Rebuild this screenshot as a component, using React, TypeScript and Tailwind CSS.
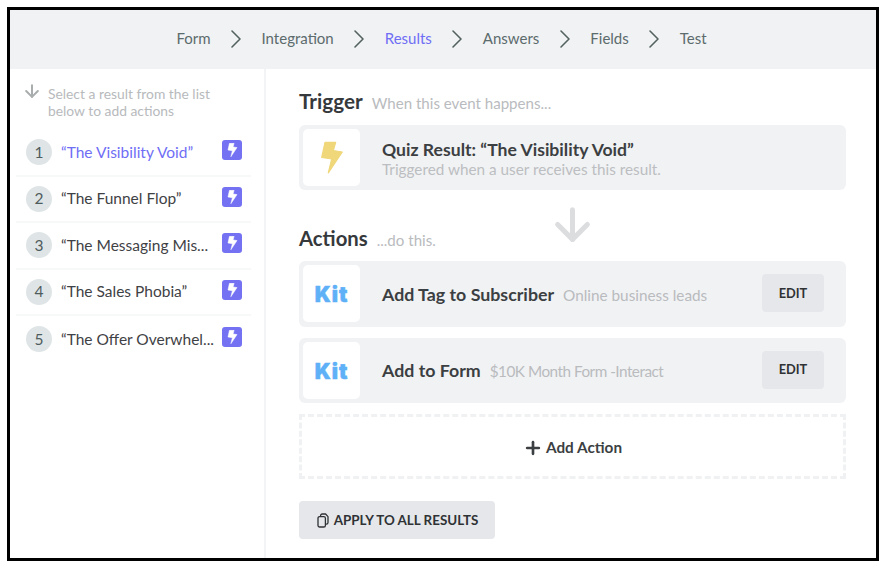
import { ArrowDown, ChevronRight, Plus } from 'lucide-react';

const steps = ['Form', 'Integration', 'Results', 'Answers', 'Fields', 'Test'];

const results = [
  '“The Visibility Void”',
  '“The Funnel Flop”',
  '“The Messaging Mis...',
  '“The Sales Phobia”',
  '“The Offer Overwhel...',
];

const Bolt = ({ className }: { className: string }) => (
  <svg viewBox="0 0 24 32" className={className} fill="currentColor">
    <path d="M5 .8 15.7.8 13.3 9 22.3 10.5 8.3 31.3 11.7 17.5 1.7 16Z" strokeLinejoin="round" stroke="currentColor" strokeWidth="1.2" />
  </svg>
);

const CopyIcon = () => (
  <svg viewBox="0 0 12 15" className="h-[15px] w-[12px]" fill="none" stroke="currentColor" strokeWidth="1.3" strokeLinejoin="round">
    <rect x="1" y="3.6" width="7.4" height="10.4" rx="1.6" />
    <path d="M3.6 3.4V2.6A1.6 1.6 0 0 1 5.2 1H8.6L11 3.6V9.6A1.6 1.6 0 0 1 9.4 11.2H8.4" />
  </svg>
);

const Tile = ({ children }: { children: React.ReactNode }) => (
  <div className="flex h-[57px] w-[57px] shrink-0 items-center justify-center rounded-[5px] bg-white">{children}</div>
);

const KitLogo = () => (
  <span className="pt-[2px] font-['Inter',sans-serif] text-[21px] leading-none font-black tracking-[1px] text-[#5eb0f7] [-webkit-text-stroke:0.5px_#5eb0f7]">Kit</span>
);

const ActionCard = ({ title, detail, detailClass }: { title: string; detail: string; detailClass: string }) => (
  <div className="flex h-[65.5px] items-center rounded-md bg-[#f1f2f4] pr-[22px] pl-1">
    <Tile>
      <KitLogo />
    </Tile>
    <div className="ml-[22px] flex flex-1 items-baseline gap-[9px] pt-[1px]">
      <span className="text-[17.8px] font-bold text-[#3c3f42]">{title}</span>
      <span className={`text-[15.3px] text-[#b9bbbe] ${detailClass}`}>{detail}</span>
    </div>
    <button className="mb-[1px] h-[38px] w-[62px] rounded bg-[#e6e7ea] text-[12.8px] font-bold text-[#2f3235]">EDIT</button>
  </div>
);

export default function App() {
  return (
    <div className="h-[570px] w-[888px] bg-white p-[7px] font-['Lato',sans-serif]">
      <div className="flex h-[554px] w-[872px] flex-col border-[3px] border-black bg-white">
        <div className="flex h-[59px] shrink-0 items-center justify-center bg-[#f0f2f4] pr-[3px] pb-[2px]">
          {steps.map((step, i) => (
            <div key={step} className="flex items-center">
              <span className={`text-[15px] ${step === 'Results' ? 'text-[#6f6ef5]' : 'text-[#5c6b6c]'}`}>{step}</span>
              {i < steps.length - 1 && <ChevronRight className="mx-[9.5px] h-[32px] w-[32px] text-[#54625f]" strokeWidth={1.2} />}
            </div>
          ))}
        </div>

        <div className="flex min-h-0 flex-1">
          <aside className="w-[256px] shrink-0 border-r-2 border-[#f3f4f5] pt-[17px] pr-[13px] pl-[6px]">
            <div className="flex pl-[10px]">
              <ArrowDown className="mt-[-5px] -ml-[4px] h-[20px] w-[20px] shrink-0 text-[#a9adad]" strokeWidth={2.4} />
              <p className="ml-[6px] text-[13.85px] leading-[16.5px] text-[#b7babc]">
                Select a result from the list
                <br />
                below to add actions
              </p>
            </div>
            <ul className="mt-[11px]">
              {results.map((result, i) => (
                <li key={result} className="flex h-[46.5px] items-center border-b-2 border-[#f7f8f8] pr-[9px] pl-[10px] last:border-b-0">
                  <span className="flex h-[26px] w-[26px] shrink-0 items-center justify-center rounded-full bg-[#dfe5e6] text-[15.5px] text-[#4f5c5e]">
                    {i + 1}
                  </span>
                  <span className={`ml-[9px] whitespace-nowrap text-[15.5px] ${i === 0 ? 'text-[#6f6ef5]' : 'text-[#3f4245]'}`}>{result}</span>
                  <span className="mb-[4px] ml-auto flex h-[20px] w-[20px] items-center justify-center rounded-[3px] bg-[#7472f3] text-white">
                    <Bolt className="h-[14px] w-[11px]" />
                  </span>
                </li>
              ))}
            </ul>
          </aside>

          <main className="relative min-w-0 flex-1 pt-[17px] pr-[30px] pl-[33px]">
            <div className="flex h-[24px] items-baseline gap-[9px]">
              <h2 className="text-[20.7px] font-bold text-[#36393c]">Trigger</h2>
              <span className="text-[15.1px] text-[#b9bbbe]">When this event happens...</span>
            </div>

            <div className="mt-[15px] flex h-[65px] items-center rounded-md bg-[#f1f2f4] pl-1">
              <Tile>
                <Bolt className="h-[33px] w-[24px] text-[#efd77a]" />
              </Tile>
              <div className="ml-[22px] pt-[2px]">
                <p className="text-[17.6px] leading-[20px] font-bold text-[#3c3f42]">Quiz Result: “The Visibility Void”</p>
                <p className="text-[15.3px] leading-[18px] text-[#bcbec1]">Triggered when a user receives this result.</p>
              </div>
            </div>

            <ArrowDown className="absolute top-[130px] left-[280.5px] h-[51px] w-[51px] text-[#dcdddf]" strokeWidth={2.35} />

            <div className="mt-[32.5px] flex h-[24px] items-baseline gap-[9px]">
              <h2 className="text-[20.3px] font-bold text-[#36393c]">Actions</h2>
              <span className="text-[15.1px] text-[#b9bbbe]">...do this.</span>
            </div>

            <div className="mt-[14.5px] flex flex-col gap-[11px]">
              <ActionCard title="Add Tag to Subscriber" detail="Online business leads" detailClass="" />
              <ActionCard title="Add to Form" detail="$10K Month Form -Interact" detailClass="tracking-[-0.5px]" />
            </div>

            <div className="mt-[11px] flex h-[65px] items-center justify-center gap-[3px] border-[3px] border-dashed border-[#f0f1f2] pt-[2px] text-[15.3px] font-bold text-[#3c3f42]">
              <Plus className="h-[20px] w-[20px]" strokeWidth={3.2} />
              Add Action
            </div>

            <button className="mt-[22px] flex h-[38px] w-[196px] items-center justify-center gap-[5px] rounded bg-[#e6e7ea] pl-[1px] text-[13.4px] font-bold text-[#2f3235]">
              <CopyIcon />
              APPLY TO ALL RESULTS
            </button>
          </main>
        </div>
      </div>
    </div>
  );
}
